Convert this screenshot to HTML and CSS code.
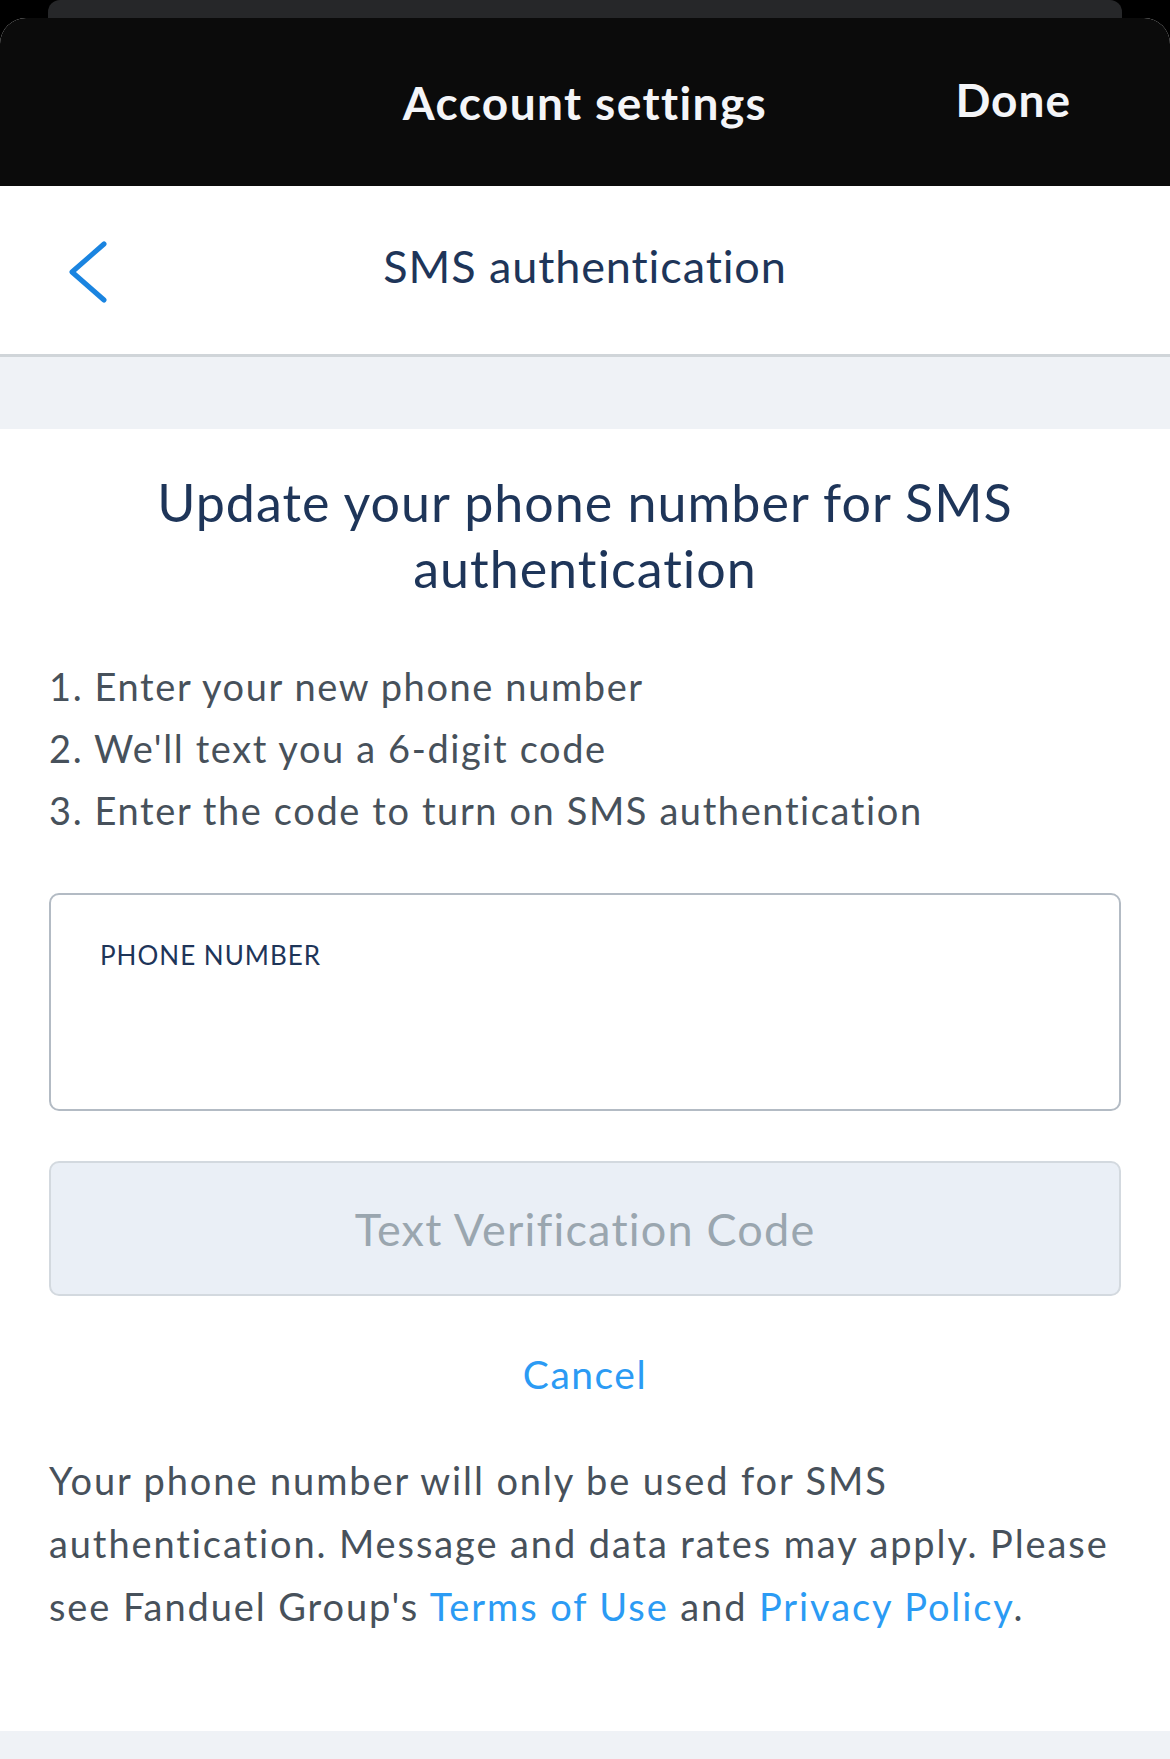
FILE: index.html
```html
<!DOCTYPE html>
<html lang="en">
<head>
    <meta charset="UTF-8">
    <meta name="viewport" content="width=device-width, initial-scale=1.0">
    <title>SMS authentication</title>
    <link rel="stylesheet" href="styles.css">
</head>
<body>

<div class="sheet-behind"></div>

<div class="sheet">
    <header class="modal-head">
        <span></span>
        <h1>Account settings</h1>
        <button class="done">Done</button>
    </header>

    <nav class="subnav">
        <button class="back" aria-label="Back">
            <svg width="42" height="66" viewBox="0 0 42 66">
                <polyline points="37,5 5,33 37,61" fill="none" stroke="#1a84e0" stroke-width="5" stroke-linecap="round" stroke-linejoin="round"/>
            </svg>
        </button>
        <h2>SMS authentication</h2>
        <span></span>
    </nav>

    <div class="gap"></div>

    <main class="content">
        <h3 class="title">Update your phone number for SMS authentication</h3>

        <ol class="steps">
            <li>1. Enter your new phone number</li>
            <li>2. We'll text you a 6-digit code</li>
            <li>3. Enter the code to turn on SMS authentication</li>
        </ol>

        <label class="field">
            <span class="field-label">PHONE NUMBER</span>
            <input type="tel">
        </label>

        <button class="send" disabled>Text Verification Code</button>

        <a class="cancel" href="#">Cancel</a>

        <p class="note">
            <span>Your phone number will only be used for SMS authentication. Message and data rates may apply. Please</span>
            <span>see Fanduel Group's</span> <a href="#">Terms of Use</a> <span>and</span> <a href="#">Privacy Policy</a>.
        </p>
    </main>

    <div class="gap bottom"></div>
</div>

</body>
</html>
```

FILE: styles.css
```css
body { margin: 0; background: #000; font-family: Lato, "Open Sans", sans-serif; }
button { font-family: inherit; background: none; border: 0; padding: 0; cursor: pointer; }

.sheet-behind { height: 18px; margin: 0 48px; background: #262729; border-radius: 12px 12px 0 0; }
.sheet { background: #fff; border-radius: 26px 26px 0 0; overflow: hidden; }

.modal-head { height: 168px; background: #0b0b0b; display: grid; grid-template-columns: 1fr auto 1fr; align-items: center; padding: 2px 99px 0; box-sizing: border-box; }
.modal-head h1 { margin: 0; color: #f4f5f8; font-size: 46px; font-weight: 700; line-height: 1; letter-spacing: 1.4px; }
.done { justify-self: end; color: #f4f5f8; font-size: 46px; font-weight: 700; line-height: 1; letter-spacing: 1px; margin-bottom: 6px; }

.subnav { height: 168px; background: #fff; border-bottom: 3px solid #d0d5d9; display: grid; grid-template-columns: 1fr auto 1fr; align-items: center; }
.subnav h2 { margin: 0 0 8px; color: #1e3559; font-size: 45px; font-weight: 400; line-height: 1; letter-spacing: 0.9px; }
.back { justify-self: start; margin-left: 67px; margin-top: 4px; display: flex; }

.gap { height: 72px; background: #eff2f6; }
.gap.bottom { height: 40px; }

.content { padding: 40px 49px 93px; }
.title { margin: 0; text-align: center; color: #1e3559; font-size: 52px; font-weight: 400; line-height: 66px; letter-spacing: 1px; }

.steps { list-style: none; margin: 54px 0 0; padding: 0; color: #47515b; font-size: 38px; line-height: 62px; letter-spacing: 1.6px; }

.field { display: block; margin-top: 52px; height: 218px; box-sizing: border-box; border: 2px solid #b3bbc4; border-radius: 10px; padding: 45px 49px 0; }
.field-label { display: block; color: #1e3559; font-size: 26px; line-height: 1.2; letter-spacing: 1px; }
.field input { border: 0; outline: 0; font-size: 40px; width: 100%; margin-top: 30px; padding: 0; background: none; }

.send { display: block; width: 100%; margin-top: 50px; height: 135px; background: #eaeff6; border: 2px solid #d3d9df; border-radius: 10px; color: #9aa6af; font-size: 45px; letter-spacing: 1.2px; }

.cancel { display: block; margin-top: 55px; text-align: center; color: #2b9bf4; text-decoration: none; font-size: 39px; line-height: 1.2; letter-spacing: 1.5px; }

.note { margin: 51px 0 0; color: #47515b; font-size: 38px; line-height: 63px; letter-spacing: 1.9px; }
.note a { color: #2b9bf4; text-decoration: none; }
```
